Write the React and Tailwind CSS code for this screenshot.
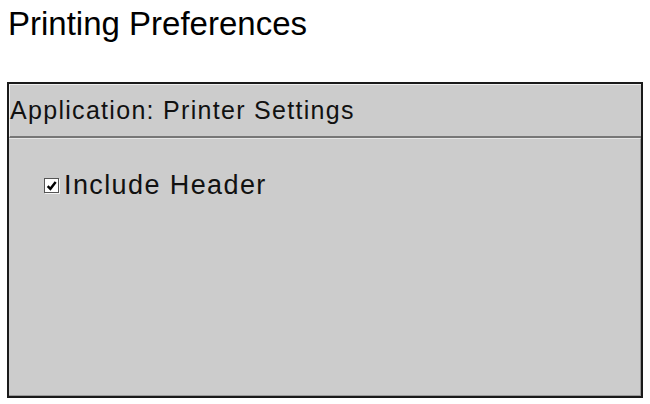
import { useState } from 'react';

export default function App() {
  const [includeHeader, setIncludeHeader] = useState(true);

  return (
    <div className="w-[650px] h-[404px] bg-white pt-[6px] font-['Liberation_Sans',Arial,sans-serif] text-black">
      <h1 className="pl-[8px] text-[33px] leading-[36px] font-normal">Printing Preferences</h1>

      <div className="ml-[7px] mt-[40px] w-[636px] h-[316px] flex flex-col border-2 border-[#1a1a1a] bg-[#cccccc]">
        <div className="flex h-[54px] items-center border-t border-l border-[#eeeeee] border-b-2 border-b-[#777777]">
          <span className="text-[25px] tracking-[1.3px] text-[#111]">
            Application: Printer Settings
          </span>
        </div>
        <div className="flex-1 border-t border-t-[#e6e6e6] border-r border-r-[#999999] border-b border-b-[#999999] pt-[26px] pl-[35px]">
          <label className="flex items-center gap-[5px] cursor-default select-none">
            <button
              type="button"
              onClick={() => setIncludeHeader(!includeHeader)}
              className="w-[15px] h-[15px] flex items-center justify-center bg-white border border-[#555] shadow-[1px_1px_0_#f4f4f4]"
            >
              {includeHeader && (
                <svg width="11" height="11" viewBox="0 0 10 10">
                  <path d="M1.5 5.5 L4 8 L8.8 1.8" fill="none" stroke="#000" strokeWidth="2.2" />
                </svg>
              )}
            </button>
            <span className="text-[27px] tracking-[1.4px] text-[#111]">
              Include Header
            </span>
          </label>
        </div>
      </div>
    </div>
  );
}
